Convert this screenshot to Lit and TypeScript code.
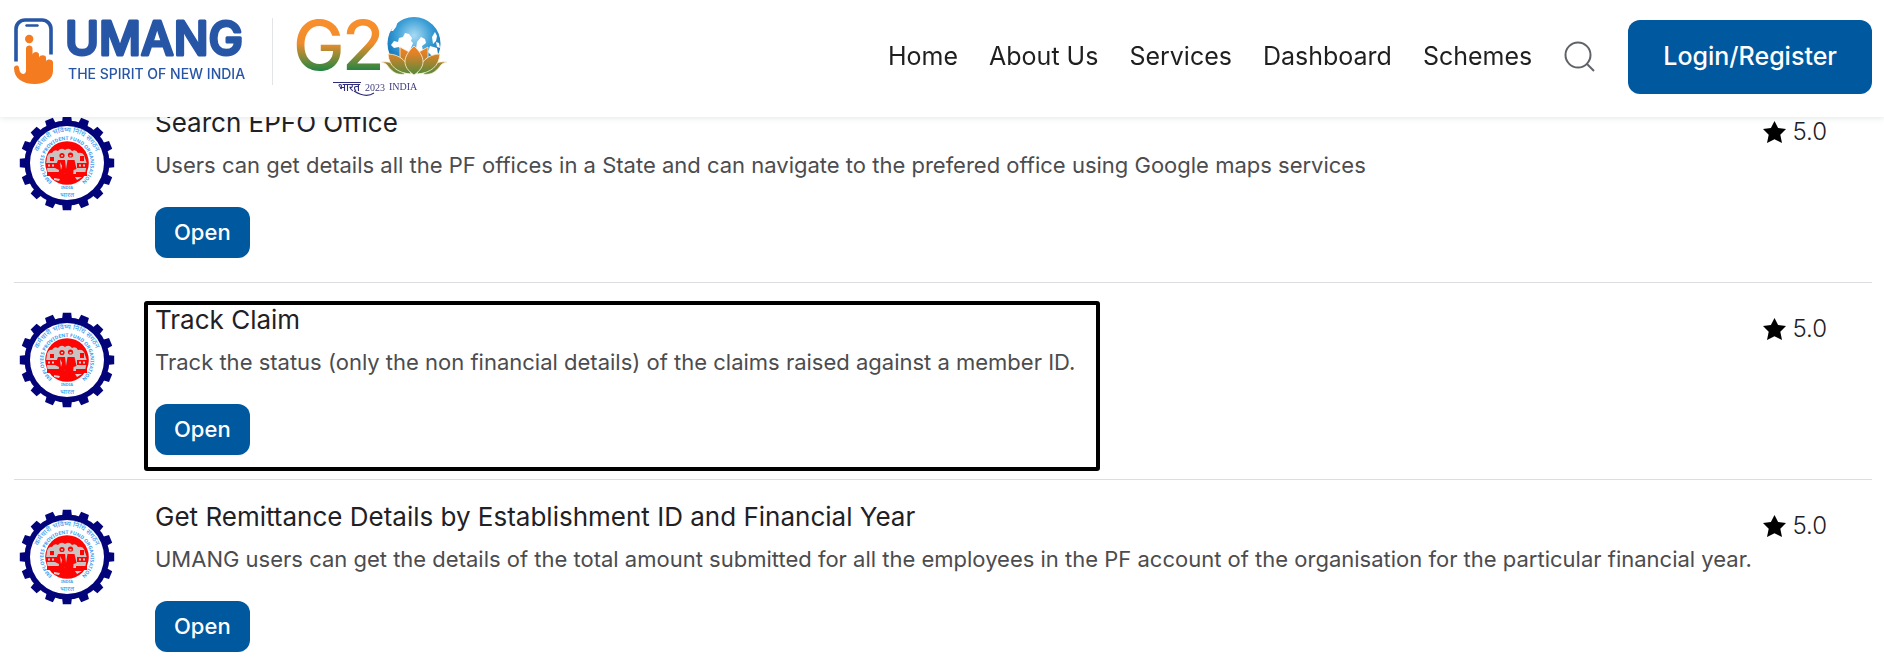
import { LitElement, html, css, svg } from "lit";
import { customElement, property } from "lit/decorators.js";
import { classMap } from "lit/directives/class-map.js";

interface Service {
  title: string;
  description: string;
  rating: string;
  marked?: boolean;
}

const SERVICES: Service[] = [
  {
    title: "Search EPFO Office",
    description:
      "Users can get details all the PF offices in a State and can navigate to the prefered office using Google maps services",
    rating: "5.0",
  },
  {
    title: "Track Claim",
    description:
      "Track the status (only the non financial details) of the claims raised against a member ID.",
    rating: "5.0",
    marked: true,
  },
  {
    title: "Get Remittance Details by Establishment ID and Financial Year",
    description:
      "UMANG users can get the details of the total amount submitted for all the employees in the PF account of the organisation for the particular financial year.",
    rating: "5.0",
  },
];

const NAV = ["Home", "About Us", "Services", "Dashboard", "Schemes"];

const TEETH = Array.from({ length: 16 }, (_, i) => i * 22.5);

@customElement("umang-logo")
class UmangLogo extends LitElement {
  static styles = css`
    :host {
      display: block;
      line-height: 0;
    }
    svg {
      overflow: visible;
    }
    .name {
      font: 500 46px Inter, "Liberation Sans", sans-serif;
      fill: #2656a5;
      stroke: #2656a5;
      stroke-width: 3;
      stroke-linejoin: round;
    }
    .tagline {
      font: 500 14px Inter, "Liberation Sans", sans-serif;
      fill: #2656a5;
    }
  `;

  render() {
    return html`
      <svg width="236" height="80" viewBox="14 17 236 80" role="img" aria-label="UMANG">
        <path
          d="M16 61.500V29a9 9 0 0 1 9-9h17a9 9 0 0 1 9 9v25.500"
          fill="none"
          stroke="#2656a5"
          stroke-width="3.600"
        />
        <path d="M26.500 25.500h11" stroke="#2656a5" stroke-width="2.400" stroke-linecap="round" />
        <circle cx="29.200" cy="39" r="4.200" fill="#f47b20" />
        <path
          d="M14 68c0-3 4.500-3.500 5-.5.300 3 1 5 2.600 6 2 1.200 4.400 0 4.400-3V48.500c0-4 6.500-4 6.500 0v6c.5-3.500 6.500-3.500 6.500 0v3c.7-3 6.800-3 7 0v4c.7-3 6.800-2.500 7 .5v9C53 79 45 84 35 84c-13 0-21-6-21-16z"
          fill="#f47b20"
        />
        <text class="name" x="65" y="55">UMANG</text>
        <text class="tagline" x="68" y="79">THE SPIRIT OF NEW INDIA</text>
      </svg>
    `;
  }
}

@customElement("g20-logo")
class G20Logo extends LitElement {
  static styles = css`
    :host {
      display: block;
      line-height: 0;
    }
    svg {
      overflow: visible;
    }
    .big {
      font: 500 69px Inter, "Liberation Sans", sans-serif;
      fill: url(#tricolour);
    }
    .small {
      font: 500 10px "Liberation Serif", serif;
      fill: #3d3a7c;
    }
    .hindi {
      font: 500 11px "Noto Sans Devanagari", "Noto Sans", sans-serif;
      fill: #2f2c78;
    }
  `;

  render() {
    return html`
      <svg width="150" height="80" viewBox="297 17 150 80" role="img" aria-label="G20">
        <defs>
          <linearGradient id="tricolour" gradientUnits="userSpaceOnUse" x1="0" y1="20" x2="0" y2="71">
            <stop offset="0" stop-color="#f98f2c" />
            <stop offset="0.450" stop-color="#f08c2c" />
            <stop offset="0.720" stop-color="#8a8b38" />
            <stop offset="1" stop-color="#1f8442" />
          </linearGradient>
          <linearGradient id="petal" gradientUnits="userSpaceOnUse" x1="0" y1="46" x2="0" y2="75">
            <stop offset="0" stop-color="#f58220" />
            <stop offset="0.300" stop-color="#d9822a" />
            <stop offset="1" stop-color="#4f8a3a" />
          </linearGradient>
          <radialGradient id="globe" cx="0.500" cy="0.350" r="0.650">
            <stop offset="0" stop-color="#a9dbf3" />
            <stop offset="0.500" stop-color="#3d9fd6" />
            <stop offset="1" stop-color="#0669b0" />
          </radialGradient>
        </defs>
        <text class="big" x="293" y="70">G</text>
        <text class="big" x="342" y="70">2</text>
        <circle cx="414" cy="43.500" r="26.500" fill="url(#globe)" />
        <path
          d="M398 42l1-4 4-1 2-4 4 1 3 4-1 3 2 2-2 5-2 6h-5l-5-7-5 1-3-3 3-4zM417 42l4-5 4 2 1 4-4 3 1 5-4 4-3-6zM391 31l3-7 4-3-2 6-3 4zM432 37l3-5 2 4-1 5-3 3zM430 46l7 2 1 6-6 2-4-4zM436 42l3 1 1 5-3-1z"
          fill="#fff"
        />
        <g fill="url(#petal)" stroke="#fff3dc" stroke-width="0.800">
          <path d="M400 47l11 6-2 14-9-7z" />
          <path d="M428 47l-11 6 2 14 9-7z" />
          <path d="M381 62c9-1 16 1 24 12-10 2-15-5-18-9-2-2-4-2.500-6-3z" />
          <path d="M447 62c-9-1-16 1-24 12 10 2 15-5 18-9 2-2 4-2.500 6-3z" />
          <path d="M388 54c12 0 20 8 23 20-14-1-22-8-23-20z" />
          <path d="M440 54c-12 0-20 8-23 20 14-1 22-8 23-20z" />
          <path d="M414 46c12 11 12 21 0 29-12-8-12-18 0-29z" />
        </g>
        <text class="hindi" x="338" y="91">भारत</text>
        <path d="M333 82.500h28M354 91c8 5 14 6 20 2" fill="none" stroke="#2f2c78" stroke-width="1.200" />
        <text class="small" x="365" y="91">2023</text>
        <text class="small" x="389" y="90">INDIA</text>
      </svg>
    `;
  }
}

@customElement("epfo-emblem")
class EpfoEmblem extends LitElement {
  static styles = css`
    :host {
      display: block;
      line-height: 0;
    }
    .ring {
      fill: #3f9ff2;
      font-family: "Noto Sans Devanagari", "Noto Sans", "Liberation Sans", sans-serif;
      font-weight: 500;
      text-anchor: middle;
    }
    .outer {
      font-size: 7px;
    }
    .inner {
      font-size: 5px;
      font-weight: 700;
    }
    .country {
      font-size: 4px;
      font-weight: 700;
    }
  `;

  render() {
    return html`
      <svg width="96" height="96" viewBox="0 0 96 96" role="img" aria-label="EPFO">
        <defs>
          <path id="outer-arc" d="M19 57A30.500 30.500 0 1 1 77 57" />
          <path id="inner-arc" d="M33 66.500A23.500 23.500 0 1 1 63 66.500" />
        </defs>
        ${TEETH.map(
          (a) => svg`<path d="M43 8l.8-7.200h8.400L53 8z" fill="#03037a" transform="rotate(${a} 48 48)" />`
        )}
        <circle cx="48" cy="48" r="42.500" fill="#03037a" />
        <circle cx="48" cy="48" r="37" fill="#fff" />
        <text class="ring outer"><textPath href="#outer-arc" startOffset="50%">कर्मचारी भविष्य निधि संगठन</textPath></text>
        <text class="ring inner"><textPath href="#inner-arc" startOffset="50%">EMPLOYEES PROVIDENT FUND ORGANISATION</textPath></text>
        <text class="ring country" x="48" y="74">INDIA</text>
        <text class="ring outer" x="48" y="82">भारत</text>
        <circle cx="48" cy="48" r="21.800" fill="#fb0505" />
        <path
          d="M28 42q2-5 5-4 2-4 6-2 3-4 7-1 4-3 7 1 4-2 6 2 4-1 6 2l3 9-2 10H29l-2-10z"
          fill="#c9c3c1"
        />
        <g fill="#fb0505">
          <path d="M27 48h11v5H27zM58 48h11v5H58zM28 57h12v4H28zM57 57h11v4H57z" />
          <circle cx="43" cy="40.500" r="2.600" />
          <circle cx="51.500" cy="40" r="2.600" />
          <path d="M39 45h7l1 9 1.500-9h7l2 9-3 1-1 13h-2l-1-9-2 9H46V58l-2 7h-5l1-10-4-2z" />
          <path d="M31 42h4v4h-4zM61 41h4v5h-4z" />
        </g>
        <path
          d="M29 49.500h2v2h-2zM33 49.500h2v2h-2zM60 49.500h2v2h-2zM64 49.500h2v2h-2zM42 40h2v1.500h-2zM50.500 40h2v1.500h-2zM41 47l2 4-1 4zM35 63l6 1-1 2-5-1zM56 62l7 0-5 3z"
          fill="#d8d0ce"
        />
      </svg>
    `;
  }
}

@customElement("service-item")
class ServiceItem extends LitElement {
  @property({ attribute: false }) service!: Service;

  static styles = css`
    :host {
      display: flex;
      align-items: flex-start;
      padding: 21px 45px 24px 5px;
      color: #1f2125;
    }
    .emblem {
      flex: none;
      margin: 8px 40px 0 0;
    }
    .details {
      position: relative;
      min-width: 0;
    }
    .title {
      margin: 0 0 10px;
      font-size: 26px;
      font-weight: 400;
      line-height: 32px;
    }
    .description {
      margin: 0 0 26px;
      font-size: 22px;
      line-height: 32px;
      color: #4c4c4e;
    }
    .open {
      display: block;
      height: 51px;
      padding: 0 19px 2px;
      border: 0;
      border-radius: 12px;
      background: #00589f;
      color: #fff;
      font: 500 22px/32px Inter, "Liberation Sans", sans-serif;
      cursor: pointer;
    }
    .marked::after {
      content: "";
      position: absolute;
      inset: -3px -25px -16px -11px;
      border: 4px solid #000;
      border-radius: 3px;
      pointer-events: none;
    }
    .rating {
      display: flex;
      flex: none;
      align-items: center;
      gap: 6px;
      margin: 9px 0 0 auto;
      font-size: 24px;
      font-weight: 300;
      line-height: 32px;
    }
  `;

  render() {
    const { title, description, rating, marked } = this.service;
    return html`
      <epfo-emblem class="emblem"></epfo-emblem>
      <div class=${classMap({ details: true, marked: !!marked })}>
        <h2 class="title">${title}</h2>
        <p class="description">${description}</p>
        <button class="open" type="button">Open</button>
      </div>
      <div class="rating">
        <svg width="23" height="22" viewBox="0 0 23 22" aria-hidden="true">
          <path d="M11.500 0l3.600 7 7.900.9-5.700 5.800 1.700 8.300-7.500-3.700L4 22l1.700-8.300L0 7.900 7.900 7z" fill="#000" />
        </svg>
        <span>${rating}</span>
      </div>
    `;
  }
}

@customElement("app-root")
class AppRoot extends LitElement {
  static styles = css`
    :host {
      display: block;
      min-height: 100vh;
      background: #fff;
      font-family: Inter, "Liberation Sans", sans-serif;
    }
    .header {
      position: sticky;
      top: 0;
      z-index: 1;
      display: flex;
      align-items: center;
      padding: 17px 12px 20px 14px;
      background: #fff;
      box-shadow: 0 1px 6px rgba(60, 80, 80, 0.14);
    }
    .brand {
      display: flex;
      margin-right: auto;
    }
    .divider {
      height: 67px;
      margin: 1px 24px 0 22px;
      border-left: 1px solid #e2e4e8;
    }
    .nav {
      display: flex;
      gap: 31px;
      padding-bottom: 2px;
      font-size: 25px;
      line-height: 32px;
    }
    .link {
      color: #1f1f1f;
      text-decoration: none;
    }
    .search {
      display: flex;
      margin: 0 32px;
      padding: 0;
      border: 0;
      background: none;
      cursor: pointer;
    }
    .login {
      height: 74px;
      padding: 0 35px 2px;
      border: 0;
      border-radius: 12px;
      background: #00589f;
      color: #fff;
      font: 500 25px/32px Inter, "Liberation Sans", sans-serif;
      cursor: pointer;
    }
    .list {
      margin: -31px 12px 0 14px;
      padding: 0;
      list-style: none;
    }
    .row {
      border-bottom: 1px solid #dcdde1;
    }
    .row:last-child {
      height: 184px;
      border-bottom: 0;
    }
  `;

  render() {
    return html`
      <header class="header">
        <div class="brand">
          <umang-logo></umang-logo>
          <span class="divider"></span>
          <g20-logo></g20-logo>
        </div>
        <nav class="nav">${NAV.map((n) => html`<a class="link" href="#">${n}</a>`)}</nav>
        <button class="search" type="button" aria-label="Search">
          <svg width="32" height="32" viewBox="0 0 32 32" fill="none" stroke="#5f6368" stroke-width="2">
            <circle cx="14" cy="14" r="12.500" />
            <path d="M22.500 22.500l7.500 7.500" />
          </svg>
        </button>
        <button class="login" type="button">Login/Register</button>
      </header>
      <main>
        <ul class="list">
          ${SERVICES.map((s) => html`<li class="row"><service-item .service=${s}></service-item></li>`)}
        </ul>
      </main>
    `;
  }
}
